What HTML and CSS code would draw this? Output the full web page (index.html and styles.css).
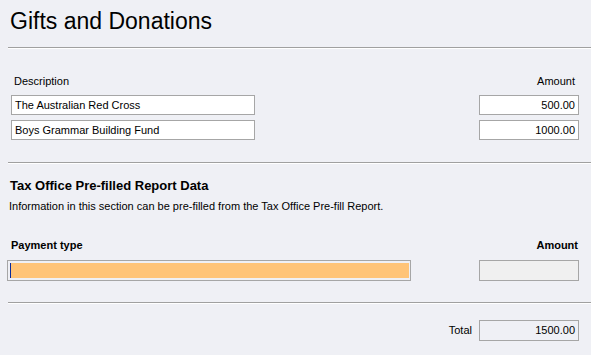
FILE: index.html
```html
<!DOCTYPE html>
<html>
<head>
<meta charset="utf-8">
<title>Gifts and Donations</title>
<link rel="stylesheet" href="styles.css">
</head>
<body>
<div class="page">
  <h1 class="title">Gifts and Donations</h1>
  <div class="sep sep-top"></div>

  <div class="grid gifts">
    <div class="lbl">Description</div>
    <div></div>
    <div class="lbl right">Amount</div>

    <div class="field">The Australian Red Cross</div>
    <div></div>
    <div class="field num">500.00</div>

    <div class="field">Boys Grammar Building Fund</div>
    <div></div>
    <div class="field num">1000.00</div>
  </div>

  <div class="sep sep-mid"></div>

  <section class="prefill">
    <h2 class="prefill-title">Tax Office Pre-filled Report Data</h2>
    <p class="prefill-info">Information in this section can be pre-filled from the Tax Office Pre-fill Report.</p>
  </section>

  <div class="grid payment">
    <div class="lbl bold">Payment type</div>
    <div></div>
    <div class="lbl bold right">Amount</div>

    <div class="field combo"><div class="combo-fill"><span class="caret"></span></div></div>
    <div></div>
    <div class="field disabled"></div>
  </div>

  <div class="sep sep-bottom"></div>

  <div class="total-row">
    <span class="total-label">Total</span>
    <div class="field num total">1500.00</div>
  </div>
</div>
</body>
</html>
```

FILE: styles.css
```css
html, body {
  margin: 0;
  padding: 0;
}

body {
  background: #eff0f5;
  font-family: "Liberation Sans", Arial, sans-serif;
  color: #000;
  width: 591px;
  height: 355px;
  overflow: hidden;
}

.title {
  margin: 0;
  padding: 8px 0 0 10px;
  font-size: 23px;
  line-height: 26px;
  font-weight: normal;
}

.sep {
  height: 0;
  margin-left: 8px;
  border-top: 1px solid #a0a0a0;
  border-bottom: 1px solid #ffffff;
}

.sep-top { margin-top: 13px; }
.sep-mid { margin-top: 22px; }
.sep-bottom { margin-top: 21px; }

.grid {
  display: grid;
  padding-right: 12px;
}

.gifts {
  margin-top: 26px;
  padding-left: 11px;
  grid-template-columns: 244px 1fr 100px;
  grid-template-rows: 15px 20px 20px;
  row-gap: 5px;
}

.lbl {
  font-size: 11px;
  line-height: 13px;
  padding-left: 3px;
}

.lbl.right {
  text-align: right;
  padding-left: 0;
  padding-right: 4px;
}

.lbl.bold {
  font-weight: bold;
}

.field {
  box-sizing: border-box;
  height: 20px;
  border: 1px solid #a6a6a6;
  background: #ffffff;
  font-size: 11px;
  line-height: 18px;
  padding: 0 3px;
  white-space: nowrap;
  overflow: hidden;
}

.field.num {
  text-align: right;
}

.prefill {
  padding-left: 10px;
}

.prefill-title {
  margin: 14px 0 0 0;
  font-size: 13px;
  line-height: 15px;
  font-weight: bold;
}

.prefill-info {
  margin: 7px 0 0 -1px;
  font-size: 11px;
  line-height: 13px;
}

.payment {
  margin-top: 26px;
  padding-left: 7px;
  grid-template-columns: 404px 1fr 100px;
  grid-template-rows: 13px 21px;
  row-gap: 8px;
}

.payment .lbl {
  padding-left: 4px;
}

.payment .lbl.right {
  padding-left: 0;
  padding-right: 1px;
}

.field.combo {
  height: 21px;
  padding: 2px 1px 2px 2px;
  background: #eff0f5;
}

.combo-fill {
  height: 100%;
  background: #ffc478;
  position: relative;
}

.caret {
  position: absolute;
  left: 0;
  top: 0;
  width: 1px;
  height: 100%;
  background: #0a2a9c;
}

.field.disabled {
  height: 21px;
  background: #f0f0f0;
}

.total-row {
  margin-top: 16px;
  display: flex;
  justify-content: flex-end;
  align-items: center;
  gap: 7px;
  padding-right: 12px;
}

.total-label {
  font-size: 11px;
  line-height: 13px;
}

.field.total {
  width: 100px;
  height: 21px;
  line-height: 19px;
  background: #eff0f5;
}
```
